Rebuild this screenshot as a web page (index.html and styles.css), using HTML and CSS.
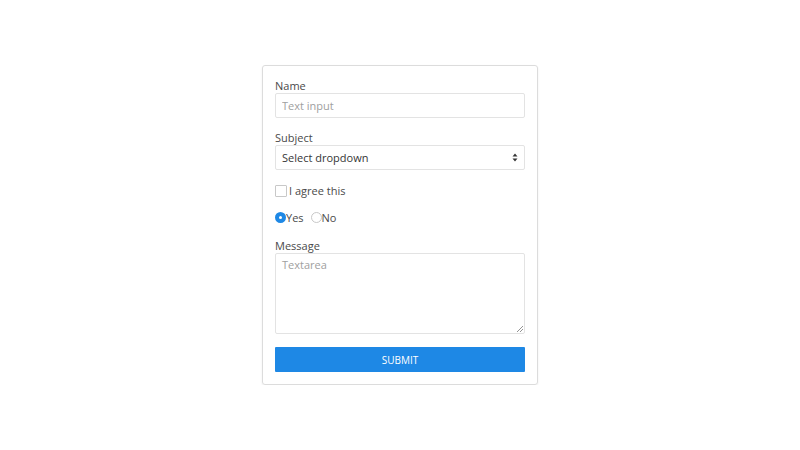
FILE: index.html
```html
<!DOCTYPE html>
<html lang="en">
<head>
  <meta charset="UTF-8" />
  <title>Form</title>
  <link rel="stylesheet" href="styles.css">
</head>
<body>
  <div class="page">
    <form class="card">
      <label class="label">Name</label>
      <input class="field" type="text" placeholder="Text input">

      <label class="label">Subject</label>
      <div class="select">
        <span>Select dropdown</span>
        <svg width="6" height="9" viewBox="0 0 6 9"><path d="M3 0.5 L5.5 3.5 H0.5 Z M3 8.5 L5.5 5.5 H0.5 Z" fill="#363636"/></svg>
      </div>

      <div class="check-row">
        <span class="checkbox"></span>
        <span>I agree this</span>
      </div>

      <div class="radio-row">
        <span class="radio checked"></span><span class="radio-text">Yes</span>
        <span class="radio"></span><span>No</span>
      </div>

      <label class="label">Message</label>
      <div class="textarea">
        <span class="placeholder">Textarea</span>
        <svg class="grip" width="6" height="6" viewBox="0 0 6 6"><path d="M6 0 L0 6 M6 3 L3 6" stroke="#777" stroke-width="0.8"/></svg>
      </div>

      <button class="submit" type="button">SUBMIT</button>
    </form>
  </div>
</body>
</html>
```

FILE: styles.css
```css
body {
  margin: 0;
  font-family: "Open Sans", "Noto Sans", sans-serif;
  font-size: 11px;
  color: #4a4a4a;
  background: #fff;
}

.page {
  display: flex;
  justify-content: center;
  padding-top: 65px;
}

.card {
  width: 250px;
  padding: 12px;
  border: 1px solid #dcdcdc;
  border-radius: 3px;
  box-shadow: 0 1px 2px rgba(0,0,0,0.08);
  display: flex;
  flex-direction: column;
}

.label {
  display: block;
  height: 15px;
  line-height: 15px;
}

.field,
.select {
  box-sizing: border-box;
  height: 25px;
  width: 100%;
  border: 1px solid #e3e3e3;
  border-radius: 2px;
  font-family: inherit;
  font-size: 11px;
  padding: 0 6px;
  margin: 0 0 12px 0;
}

.field::placeholder {
  color: #a0a0a0;
}

.select {
  display: flex;
  align-items: center;
  justify-content: space-between;
  color: #363636;
}

.check-row,
.radio-row {
  display: flex;
  align-items: center;
  height: 15px;
  margin: 1px 0 11px 0;
}

.radio-row {
  margin-bottom: 13px;
}

.checkbox {
  width: 10px;
  height: 10px;
  border: 1px solid #c8c8c8;
  border-radius: 1px;
  margin-right: 2px;
}

.radio {
  box-sizing: border-box;
  width: 11px;
  height: 11px;
  border: 1px solid #c8c8c8;
  border-radius: 50%;
}

.radio.checked {
  border: 4px solid #1e88e5;
  background: #fff;
}

.radio-text {
  margin-right: 7px;
}

.textarea {
  box-sizing: border-box;
  position: relative;
  height: 81px;
  border: 1px solid #e3e3e3;
  border-radius: 2px;
  padding: 3px 6px;
  margin-bottom: 13px;
}

.placeholder {
  color: #a0a0a0;
}

.grip {
  position: absolute;
  right: 1px;
  bottom: 1px;
}

.submit {
  height: 25px;
  border: none;
  background: #1e88e5;
  color: #fff;
  font-family: inherit;
  font-size: 10px;
  border-radius: 1px;
}
```
